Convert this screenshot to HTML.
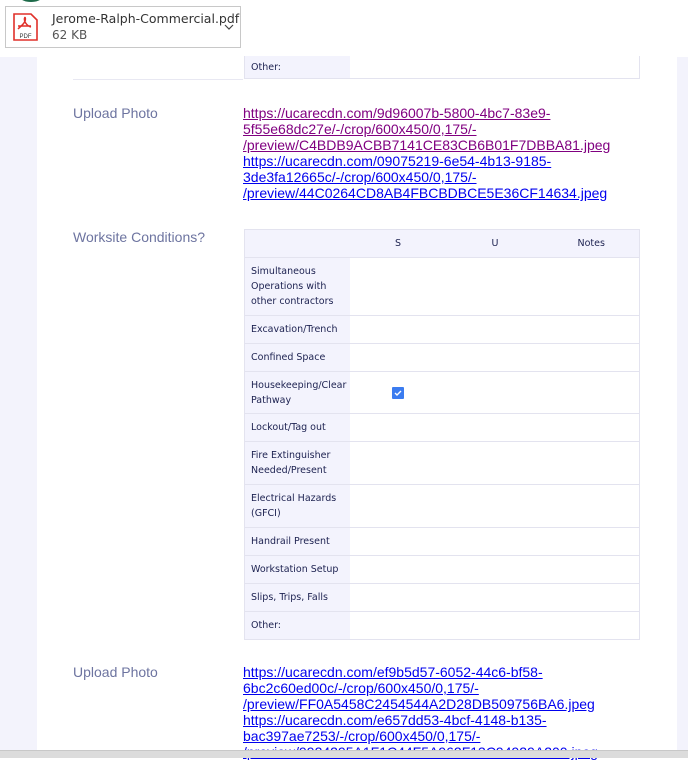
<!DOCTYPE html>
<html><head><style>
body{margin:0;width:688px;height:757px;overflow:hidden;background:#fff;position:relative;font-family:"Liberation Sans",sans-serif}
.abs{position:absolute}
.lbl{position:absolute;left:73px;font-size:14px;color:#6d74a0}
.links{position:absolute;left:243px;font-size:14px;line-height:16px}
.links a{color:#0000ee;text-decoration:underline;display:block}
table{border-collapse:collapse;font-family:"DejaVu Sans",sans-serif;font-size:9.5px;color:#1c2150;table-layout:fixed}
td{border-top:1px solid #e3e3ef;border-bottom:1px solid #e3e3ef;padding:0 6px;vertical-align:middle;line-height:15px}
td:first-child{border-left:1px solid #e3e3ef}
td:last-child{border-right:1px solid #e3e3ef}
td.l{background:#f3f3fd}
</style></head><body>
<div class="abs" style="left:0;top:57px;width:37px;height:700px;background:#f3f3fc"></div>
<div class="abs" style="left:677px;top:57px;width:11px;height:700px;background:#f3f3fc"></div>
<div class="abs" style="left:20px;top:-8px;width:22px;height:10px;border-radius:50%;background:#1e6b4a"></div>
<div class="abs" style="left:5px;top:6px;width:234px;height:40px;border:1px solid #c8c8c8;background:#fff"></div>
<svg class="abs" style="left:13px;top:12px" width="26" height="30" viewBox="0 0 26 30"><path d="M1 2h17l6 6v20H1z" fill="#fff" stroke="#e0302a" stroke-width="1.6"/><path d="M12 5c-2 4 2 9 6 10M12 5c2 5-4 9-7 12M5 14h13" fill="none" stroke="#e0302a" stroke-width="1.5"/><text x="12.5" y="26" font-size="6" font-family="Liberation Sans" text-anchor="middle" fill="#333">PDF</text></svg>
<div class="abs" style="left:52px;top:11px;color:#333;font-family:'DejaVu Sans',sans-serif;font-size:12.5px">Jerome-Ralph-Commercial.pdf</div>
<div class="abs" style="left:52px;top:28px;font-size:12px;color:#555;font-family:'DejaVu Sans',sans-serif">62 KB</div>
<svg class="abs" style="left:224px;top:24px" width="10" height="6"><path d="M1 1l4 4 4-4" fill="none" stroke="#444" stroke-width="1.2"/></svg>

<div class="abs" style="left:73px;top:79px;width:170px;height:1px;background:#e8e8f2"></div>
<table class="abs" style="left:244px;top:56px;width:396px"><colgroup><col style="width:105px"><col></colgroup><tr><td class="l" style="height:22px;border-top:none">Other:</td><td style="border-top:none"></td></tr></table>

<div class="lbl" style="top:105px">Upload Photo</div>
<div class="links" style="top:105px"><a style="color:#800080">https://ucarecdn.com/9d96007b-5800-4bc7-83e9-<br>5f55e68dc27e/-/crop/600x450/0,175/-<br>/preview/C4BDB9ACBB7141CE83CB6B01F7DBBA81.jpeg</a><a>https://ucarecdn.com/09075219-6e54-4b13-9185-<br>3de3fa12665c/-/crop/600x450/0,175/-<br>/preview/44C0264CD8AB4FBCBDBCE5E36CF14634.jpeg</a></div>

<div class="lbl" style="top:229px">Worksite Conditions?</div>
<table class="abs" style="left:244px;top:229px;width:396px">
<colgroup><col style="width:105px"><col style="width:97px"><col style="width:97px"><col></colgroup>
<tr style="background:#f3f3fd;height:28px"><td class="l"></td><td style="text-align:center">S</td><td style="text-align:center">U</td><td style="text-align:center">Notes</td></tr>
<tr style="height:58px"><td class="l">Simultaneous Operations with other contractors</td><td></td><td></td><td></td></tr>
<tr style="height:28px"><td class="l">Excavation/Trench</td><td></td><td></td><td></td></tr>
<tr style="height:28px"><td class="l">Confined Space</td><td></td><td></td><td></td></tr>
<tr style="height:42px"><td class="l">Housekeeping/Clear Pathway</td><td style="text-align:center"><svg width="12" height="12" style="vertical-align:middle"><rect width="12" height="12" rx="1" fill="#3b7cf0"/><path d="M3 6l2 2 4-4" fill="none" stroke="#fff" stroke-width="1.4"/></svg></td><td></td><td></td></tr>
<tr style="height:28px"><td class="l">Lockout/Tag out</td><td></td><td></td><td></td></tr>
<tr style="height:43px"><td class="l">Fire Extinguisher Needed/Present</td><td></td><td></td><td></td></tr>
<tr style="height:43px"><td class="l">Electrical Hazards (GFCI)</td><td></td><td></td><td></td></tr>
<tr style="height:28px"><td class="l">Handrail Present</td><td></td><td></td><td></td></tr>
<tr style="height:28px"><td class="l">Workstation Setup</td><td></td><td></td><td></td></tr>
<tr style="height:28px"><td class="l">Slips, Trips, Falls</td><td></td><td></td><td></td></tr>
<tr style="height:28px"><td class="l">Other:</td><td></td><td></td><td></td></tr>
</table>

<div class="lbl" style="top:664px">Upload Photo</div>
<div class="links" style="top:664px"><a>https://ucarecdn.com/ef9b5d57-6052-44c6-bf58-<br>6bc2c60ed00c/-/crop/600x450/0,175/-<br>/preview/FF0A5458C2454544A2D28DB509756BA6.jpeg</a><a>https://ucarecdn.com/e657dd53-4bcf-4148-b135-<br>bac397ae7253/-/crop/600x450/0,175/-<br>/preview/9924295A1F1C44F5A962F13C94929A200.jpeg</a></div>
<div class="abs" style="left:0;top:750px;width:688px;height:7px;background:#dcdcdc;border-top:1px solid #c8c8c8"></div>
</body></html>
